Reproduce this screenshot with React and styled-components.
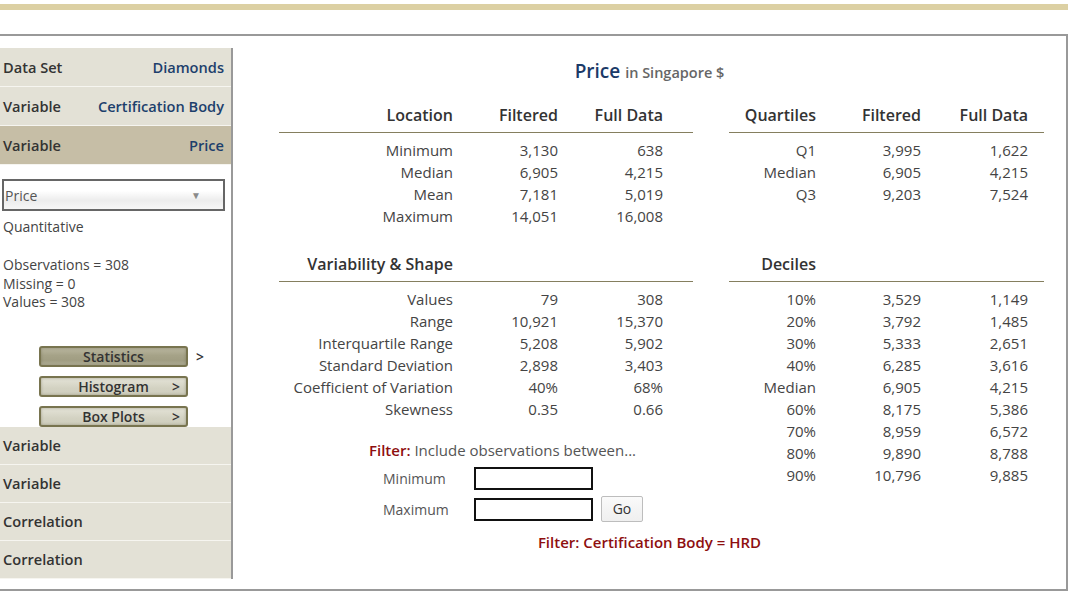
import React from "react";
import styled, { createGlobalStyle } from "styled-components";

const GlobalStyle = createGlobalStyle`
  body {
    margin: 0;
    background: #fff;
    font-family: "Open Sans", "Liberation Sans", sans-serif;
    font-size: 14px;
    color: #444;
  }
`;

const location = [
  ["Minimum", "3,130", "638"],
  ["Median", "6,905", "4,215"],
  ["Mean", "7,181", "5,019"],
  ["Maximum", "14,051", "16,008"],
];

const quartiles = [
  ["Q1", "3,995", "1,622"],
  ["Median", "6,905", "4,215"],
  ["Q3", "9,203", "7,524"],
];

const variability = [
  ["Values", "79", "308"],
  ["Range", "10,921", "15,370"],
  ["Interquartile Range", "5,208", "5,902"],
  ["Standard Deviation", "2,898", "3,403"],
  ["Coefficient of Variation", "40%", "68%"],
  ["Skewness", "0.35", "0.66"],
];

const deciles = [
  ["10%", "3,529", "1,149"],
  ["20%", "3,792", "1,485"],
  ["30%", "5,333", "2,651"],
  ["40%", "6,285", "3,616"],
  ["Median", "6,905", "4,215"],
  ["60%", "8,175", "5,386"],
  ["70%", "8,959", "6,572"],
  ["80%", "9,890", "8,788"],
  ["90%", "10,796", "9,885"],
];

function StatTable({ heads, rows, cols, width }) {
  return (
    <Table $width={width}>
      <HeadRow $cols={cols}>
        {heads.map((h, i) => (
          <Cell key={i}>{h}</Cell>
        ))}
      </HeadRow>
      <Body>
        {rows.map((r) => (
          <BodyRow key={r[0]} $cols={cols}>
            {r.map((c, i) => (
              <Cell key={i}>{c}</Cell>
            ))}
          </BodyRow>
        ))}
      </Body>
    </Table>
  );
}

export default function App() {
  return (
    <>
      <GlobalStyle />
      <Page>
        <TopBand />
        <Frame>
          <Sidebar>
            <NavGroup>
              <NavRow>
                <span>Data Set</span>
                <NavValue>Diamonds</NavValue>
              </NavRow>
              <NavRow>
                <span>Variable</span>
                <NavValue>Certification Body</NavValue>
              </NavRow>
              <NavRow $active>
                <span>Variable</span>
                <NavValue>Price</NavValue>
              </NavRow>
            </NavGroup>

            <VarPanel>
              <SelectBox>
                <span>Price</span>
                <Arrow>▼</Arrow>
              </SelectBox>
              <TypeLine>Quantitative</TypeLine>
              <Counts>
                <div>Observations = 308</div>
                <div>Missing = 0</div>
                <div>Values = 308</div>
              </Counts>
              <Buttons>
                <ButtonLine>
                  <NavButton $active>Statistics</NavButton>
                  <OuterChevron>&gt;</OuterChevron>
                </ButtonLine>
                <ButtonLine>
                  <NavButton>
                    Histogram<InnerChevron>&gt;</InnerChevron>
                  </NavButton>
                </ButtonLine>
                <ButtonLine>
                  <NavButton>
                    Box Plots<InnerChevron>&gt;</InnerChevron>
                  </NavButton>
                </ButtonLine>
              </Buttons>
            </VarPanel>

            <NavGroup>
              <NavRow $compact>
                <span>Variable</span>
              </NavRow>
              <NavRow $compact>
                <span>Variable</span>
              </NavRow>
              <NavRow $compact>
                <span>Correlation</span>
              </NavRow>
              <NavRow $compact>
                <span>Correlation</span>
              </NavRow>
            </NavGroup>
          </Sidebar>

          <Main>
            <Title>
              Price <small>in Singapore $</small>
            </Title>
            <Grid>
              <StatTable
                heads={["Location", "Filtered", "Full Data"]}
                rows={location}
                cols="174px 105px 105px"
                width={414}
              />
              <StatTable
                heads={["Quartiles", "Filtered", "Full Data"]}
                rows={quartiles}
                cols="87px 105px 107px"
                width={315}
              />
              <div>
                <StatTable
                  heads={["Variability & Shape", "", ""]}
                  rows={variability}
                  cols="174px 105px 105px"
                  width={414}
                />
                <FilterForm>
                  <FilterIntro>
                    <Red>Filter:</Red> Include observations between...
                  </FilterIntro>
                  <FormRow>
                    <FormLabel>Minimum</FormLabel>
                    <TextBox />
                  </FormRow>
                  <FormRow>
                    <FormLabel>Maximum</FormLabel>
                    <TextBox />
                    <GoButton>Go</GoButton>
                  </FormRow>
                </FilterForm>
              </div>
              <StatTable
                heads={["Deciles", "", ""]}
                rows={deciles}
                cols="87px 105px 107px"
                width={315}
              />
            </Grid>
            <FilterNote>Filter: Certification Body = HRD</FilterNote>
          </Main>
        </Frame>
      </Page>
    </>
  );
}

const Page = styled.div`
  width: 1068px;
  padding-top: 4px;
`;

const TopBand = styled.div`
  height: 6px;
  background: #dcd0a3;
`;

const Frame = styled.div`
  margin-top: 24px;
  display: flex;
  border: 2px solid #999;
  border-left: none;
  padding: 12px 0 10px;
`;

const Sidebar = styled.div`
  width: 231px;
  flex: none;
  border-right: 2px solid #999;
  display: flex;
  flex-direction: column;
`;

const NavGroup = styled.div`
  display: flex;
  flex-direction: column;
`;

const NavRow = styled.div`
  height: ${(p) => (p.$compact ? "37px" : "38px")};
  border-bottom: 1px solid #f6f5f0;
  background: ${(p) => (p.$active ? "#c6bea6" : "#e3e1d6")};
  display: flex;
  align-items: center;
  justify-content: space-between;
  padding: 0 7px 0 3px;
  font-size: 14.6px;
  font-weight: 600;
  color: #333;
`;

const NavValue = styled.span`
  color: #1d3f6c;
`;

const VarPanel = styled.div`
  display: flex;
  flex-direction: column;
  padding-top: 14px;
`;

const SelectBox = styled.div`
  box-sizing: border-box;
  margin-left: 2px;
  width: 223px;
  height: 32px;
  border: 2px solid #666;
  background: linear-gradient(#fff 0%, #fff 35%, #ececec 70%, #f6f6f6 100%);
  display: flex;
  align-items: center;
  justify-content: space-between;
  padding: 0 22px 0 1px;
  color: #555;
`;

const Arrow = styled.span`
  font-size: 10px;
  color: #8a8a8a;
`;

const TypeLine = styled.div`
  margin-top: 7px;
  padding-left: 3px;
  line-height: 18px;
`;

const Counts = styled.div`
  margin-top: 20px;
  padding-left: 3px;
  line-height: 18.5px;
`;

const Buttons = styled.div`
  margin-top: 34px;
  padding-left: 39px;
  display: flex;
  flex-direction: column;
  gap: 9px;
`;

const ButtonLine = styled.div`
  display: flex;
  align-items: center;
  gap: 8px;
`;

const NavButton = styled.div`
  position: relative;
  width: 145px;
  height: 17px;
  border: 2px solid #78744f;
  border-radius: 3px;
  background: ${(p) =>
    p.$active
      ? "linear-gradient(#b9b69f, #a5a287 45%, #a09d82 75%, #b3b19a)"
      : "linear-gradient(#e4e3d7, #d3d2c2 60%, #cfcebd)"};
  box-shadow: inset 0 0 3px rgba(90, 86, 60, 0.45);
  text-align: center;
  line-height: 17px;
  font-weight: 600;
  color: #333;
`;

const InnerChevron = styled.span`
  position: absolute;
  right: 6px;
  top: 0;
`;

const OuterChevron = styled.span`
  font-weight: 600;
  color: #333;
`;

const Main = styled.div`
  flex: 1;
  display: flex;
  flex-direction: column;
  padding-top: 10px;
  font-size: 15px;
`;

const Title = styled.div`
  text-align: center;
  font-size: 19px;
  font-weight: 600;
  line-height: 26px;
  color: #1b3a68;

  small {
    font-size: 14.5px;
    color: #666;
  }
`;

const Grid = styled.div`
  margin-top: 18px;
  padding-left: 46px;
  display: grid;
  grid-template-columns: 414px 315px;
  column-gap: 36px;
  row-gap: 26px;
  align-items: start;
`;

const Table = styled.div`
  width: ${(p) => p.$width}px;
`;

const HeadRow = styled.div`
  display: grid;
  grid-template-columns: ${(p) => p.$cols};
  line-height: 22px;
  padding-bottom: 6px;
  border-bottom: 1px solid #857f5f;
  font-size: 16px;
  font-weight: 600;
  color: #333;
  white-space: nowrap;
`;

const Body = styled.div`
  padding-top: 6px;
`;

const BodyRow = styled.div`
  display: grid;
  grid-template-columns: ${(p) => p.$cols};
  line-height: 22px;
  color: #444;
`;

const Cell = styled.div`
  text-align: right;
`;

const FilterForm = styled.div`
  margin-top: 19px;
  padding-left: 90px;
  display: flex;
  flex-direction: column;
  gap: 6px;
`;

const FilterIntro = styled.div`
  line-height: 22px;
  color: #555;
`;

const Red = styled.span`
  color: #8e0f0f;
  font-weight: 600;
`;

const FormRow = styled.div`
  display: flex;
  align-items: center;
  padding-left: 14px;
  gap: 8px;
  font-size: 14px;
`;

const FormLabel = styled.span`
  width: 83px;
  color: #555;
`;

const TextBox = styled.div`
  width: 115px;
  height: 19px;
  border: 2px solid #111;
  background: #fff;
`;

const GoButton = styled.div`
  width: 40px;
  height: 24px;
  border: 1px solid #bdbdbd;
  border-radius: 2px;
  background: linear-gradient(#fafafa, #efefef);
  text-align: center;
  line-height: 24px;
  color: #333;
`;

const FilterNote = styled.div`
  margin-top: 9px;
  text-align: center;
  line-height: 22px;
  font-weight: 600;
  color: #8e0f0f;
`;
